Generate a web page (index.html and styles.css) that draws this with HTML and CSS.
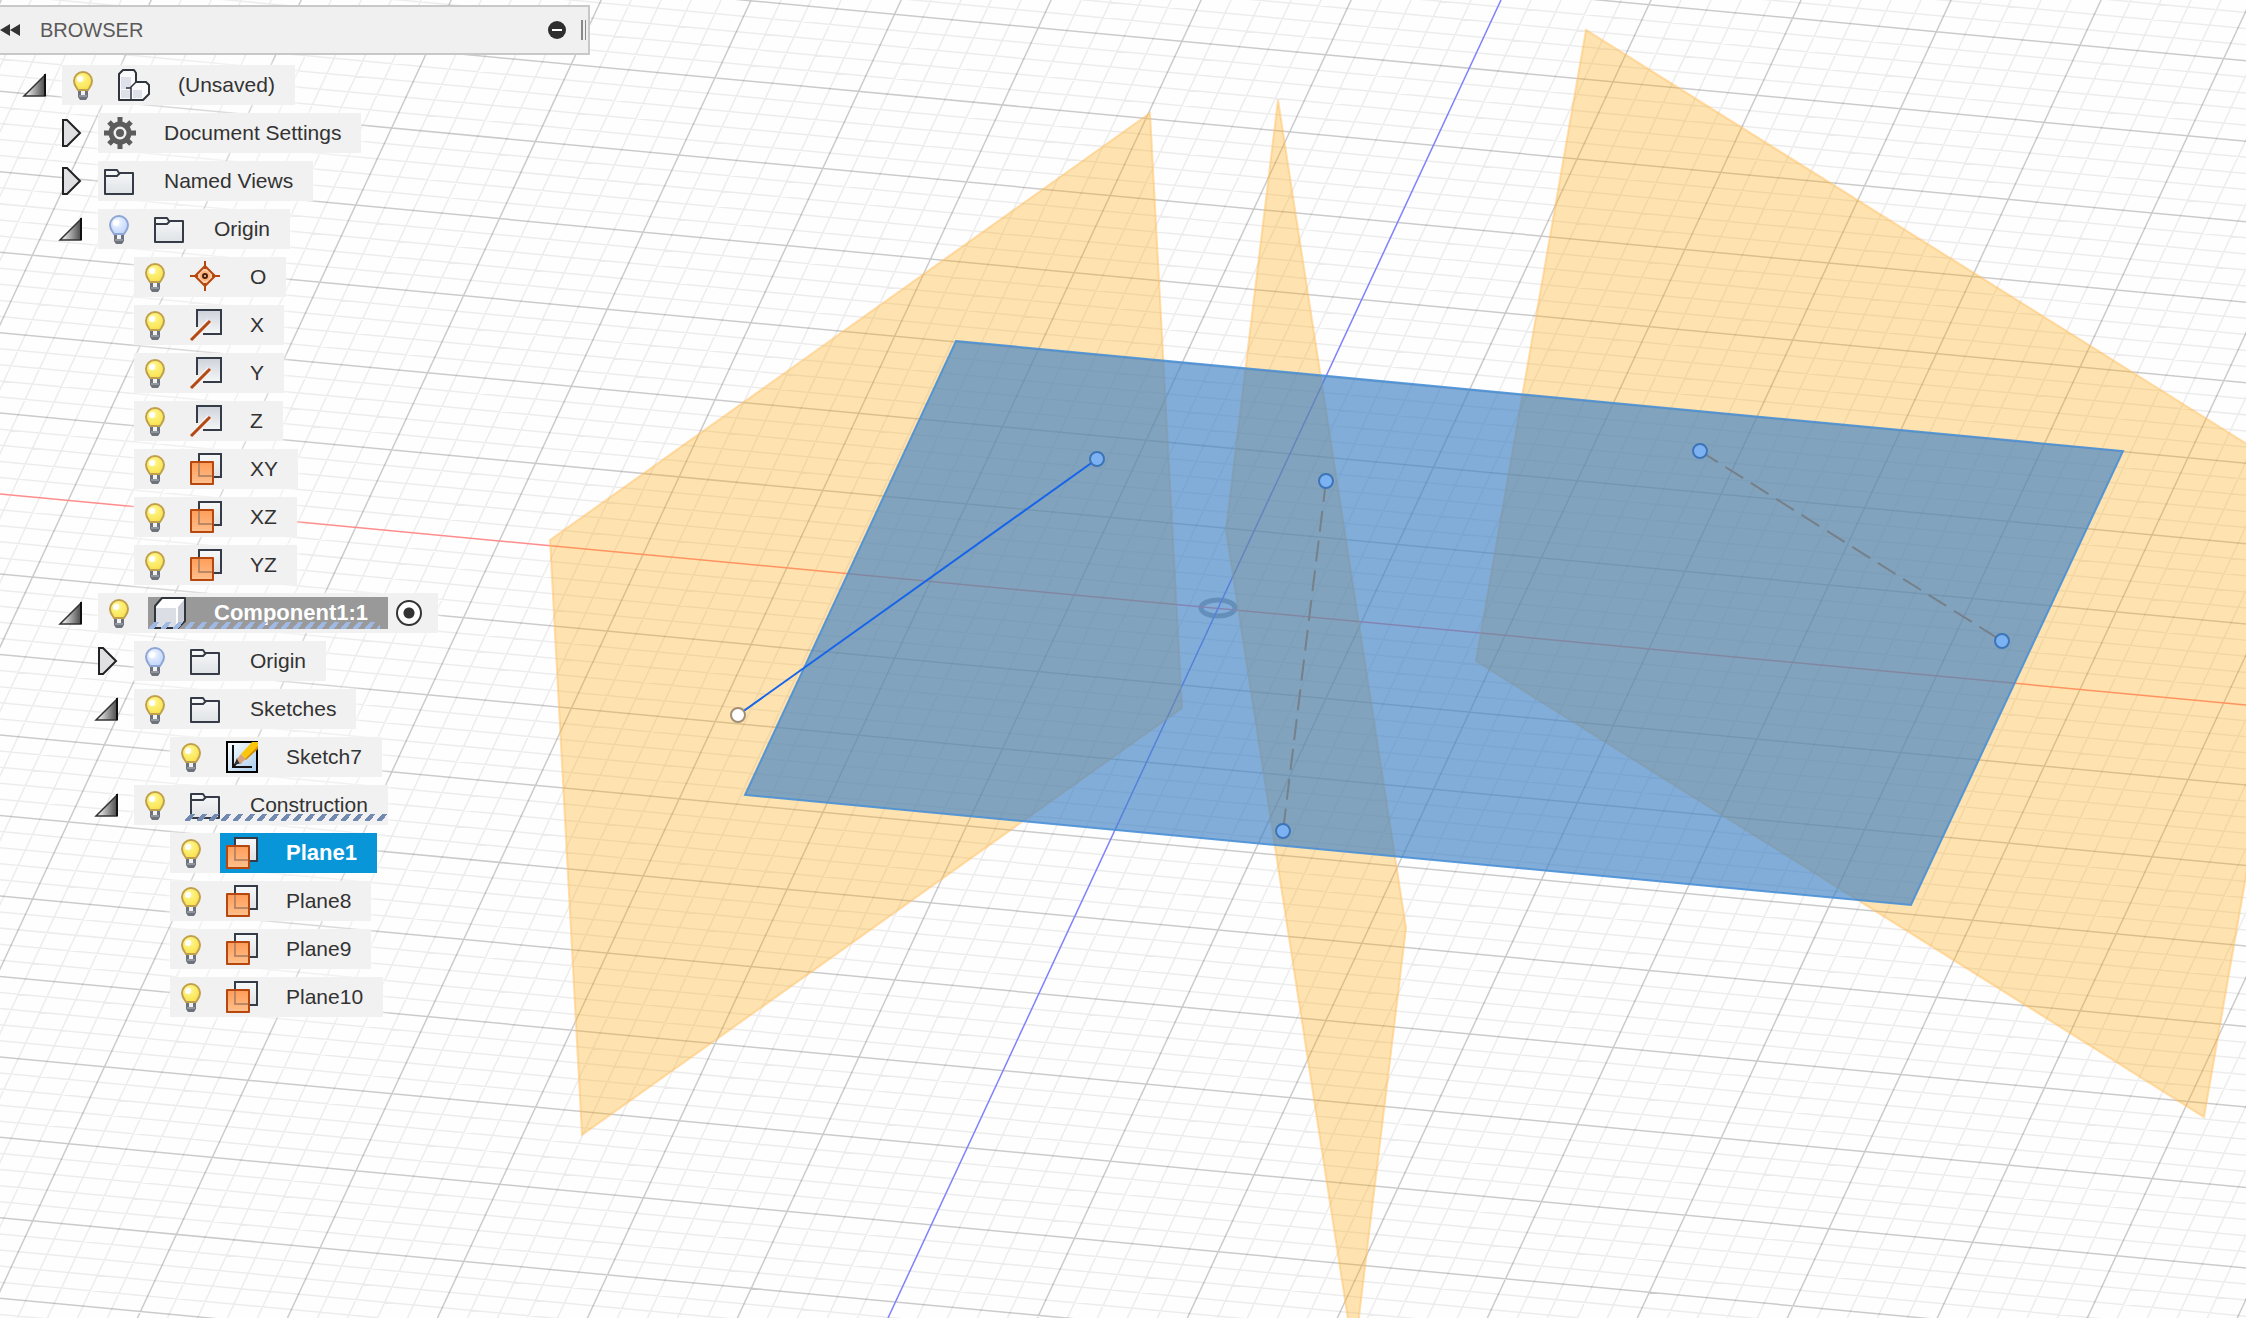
FILE: index.html
```html
<!DOCTYPE html>
<html lang="en">
<head>
  <meta charset="UTF-8" />
  <meta name="viewport" content="width=device-width, initial-scale=1.0"/>
  <title>Browser</title>
  <link rel="stylesheet" href="styles.css">
</head>
<body>

  <!-- shared icons -->
  <svg class="defs" aria-hidden="true">
    <defs>
      <radialGradient id="glow" cx="0.4" cy="0.35" r="0.7">
        <stop offset="0" stop-color="#fffde0"/><stop offset="0.3" stop-color="#fdf27c"/><stop offset="1" stop-color="#f8e04c"/>
      </radialGradient>
      <radialGradient id="dim" cx="0.4" cy="0.35" r="0.7">
        <stop offset="0" stop-color="#f8fbff"/><stop offset="0.5" stop-color="#d8e4ff"/><stop offset="1" stop-color="#c0d4fc"/>
      </radialGradient>
      <linearGradient id="dark" x1="0" y1="0" x2="1" y2="0">
        <stop offset="0.2" stop-color="#e0e0e0"/><stop offset="1" stop-color="#4a4a4a"/>
      </linearGradient>
      <linearGradient id="steel" x1="0" y1="0" x2="0" y2="1">
        <stop offset="0" stop-color="#cfd3da"/><stop offset="1" stop-color="#f4f5f7"/>
      </linearGradient>
      <linearGradient id="paper" x1="0" y1="0" x2="0" y2="1">
        <stop offset="0" stop-color="#f8f9fa"/><stop offset="1" stop-color="#dfe2e6"/>
      </linearGradient>
      <linearGradient id="copper" x1="0" y1="0" x2="0" y2="1">
        <stop offset="0" stop-color="#ff9c58"/><stop offset="1" stop-color="#ffc08c"/>
      </linearGradient>
      <linearGradient id="sky" x1="0" y1="0" x2="1" y2="1">
        <stop offset="0" stop-color="#ffffff"/><stop offset="1" stop-color="#a8cdee"/>
      </linearGradient>
    </defs>
    <symbol id="bulb-base" viewBox="0 0 20 30">
      <path d="M5 19h10v7l-2 3H7l-2-3z" fill="#6d727c"/>
      <path d="M8 20h4v4H8z" fill="#f0f1f3"/>
      <path d="M6 25h8" stroke="#b4b8c0" stroke-width="1"/>
    </symbol>
    <symbol id="bulb-on" viewBox="0 0 20 30">
      <use href="#bulb-base"/>
      <path d="M10 1a9 9 0 0 1 9 9c0 4-2 6-4 9H5C3 16 1 14 1 10a9 9 0 0 1 9-9z" fill="url(#glow)" stroke="#c0a04c" stroke-width="2"/>
      <circle cx="7" cy="8" r="3" fill="#fff"/>
    </symbol>
    <symbol id="bulb-off" viewBox="0 0 20 30">
      <use href="#bulb-base"/>
      <path d="M10 1a9 9 0 0 1 9 9c0 4-2 6-4 9H5C3 16 1 14 1 10a9 9 0 0 1 9-9z" fill="url(#dim)" stroke="#8ea6d4" stroke-width="2"/>
      <circle cx="7" cy="8" r="3" fill="#fff"/>
    </symbol>
    <symbol id="open" viewBox="0 0 24 24">
      <path d="M2 23h21V2z" fill="url(#dark)" stroke="#333" stroke-width="1.500"/>
      <path d="M23 1v22" stroke="#111" stroke-width="2"/>
    </symbol>
    <symbol id="closed" viewBox="0 0 20 28">
      <path d="M1 1h4l13 13L5 27H1z" fill="#e0e0e3" stroke="#222" stroke-width="2"/>
    </symbol>
    <symbol id="folder" viewBox="0 0 32 32">
      <path d="M1 5h12l2 3h14v21H1z" fill="url(#paper)" stroke="#353c48" stroke-width="2" stroke-linejoin="round"/>
      <path d="M1 11h12l3-3" fill="none" stroke="#353c48" stroke-width="2"/>
    </symbol>
    <symbol id="gear" viewBox="0 0 32 32">
      <path d="M16 0v32M0 16h32M5 5l22 22M27 5L5 27" stroke="#5c5c5c" stroke-width="5"/>
      <circle cx="16" cy="16" r="9" fill="#f0f0f0" stroke="#5c5c5c" stroke-width="5"/>
      <circle cx="16" cy="16" r="4" fill="#5c5c5c"/>
    </symbol>
    <symbol id="assembly" viewBox="0 0 32 32">
      <path d="M1 31V5l4-4h11l2 3v9h10l3 3v9l-6 6z" fill="#fbfbfd" stroke="#30343c" stroke-width="2" stroke-linejoin="round"/>
      <path d="M3 8h10v10l-1 2H3zM3 21h9v8H3zM15 21h9v8h-9z" fill="#dfe1ea"/>
      <path d="M13 30V18l5-5M13 19H8" fill="none" stroke="#30343c" stroke-width="1.500"/>
    </symbol>
    <symbol id="point" viewBox="0 0 32 32">
      <path d="M15 5l10 10-10 10L5 15z" fill="#ffd0ac" stroke="#b5470f" stroke-width="2"/>
      <path d="M15 0v8M15 22v8M0 15h8M22 15h8" stroke="#b5470f" stroke-width="2"/>
      <circle cx="15" cy="15" r="5" fill="#ffb07c"/>
      <circle cx="15" cy="15" r="2" fill="#ffd0ac" stroke="#4a2008" stroke-width="2"/>
    </symbol>
    <symbol id="axis" viewBox="0 0 32 32">
      <path d="M8 2h22v22H14l-6-3z" fill="url(#steel)"/>
      <path d="M7 18V1h24v24H13" fill="none" stroke="#353c48" stroke-width="2"/>
      <path d="M1 31l19-19" stroke="#f1f1f1" stroke-width="6"/>
      <path d="M1 31l19-19" stroke="#b5470f" stroke-width="3"/>
    </symbol>
    <symbol id="plane" viewBox="0 0 32 32">
      <path d="M9 1h22v23H9z" fill="url(#paper)" stroke="#353c48" stroke-width="2"/>
      <path d="M1 9h22v22H1z" fill="url(#copper)" stroke="#b5470f" stroke-width="2" stroke-linejoin="round"/>
      <path d="M9 10v13h13" fill="none" stroke="#b98763" stroke-width="2"/>
    </symbol>
    <symbol id="cube" viewBox="0 0 32 32">
      <path d="M1 31V9l7-8h23v23l-7 7z" fill="#fff" stroke="#30343c" stroke-width="2" stroke-linejoin="round"/>
      <path d="M2 11h20v19H2z" fill="#dcdee6"/>
      <path d="M24 10l6-7v20l-6 7z" fill="#c9ccd4"/>
    </symbol>
    <symbol id="sketch" viewBox="0 0 32 32">
      <path d="M1 1h30v30H1z" fill="url(#sky)" stroke="#000" stroke-width="2"/>
      <path d="M7 4v22h19M7 26l6-7" fill="none" stroke="#111" stroke-width="2"/>
      <path d="M8 24l3-7 5 5z" fill="#333"/>
      <path d="M11 18l4-5 5 5-6 5z" fill="#d9a27a"/>
      <path d="M15 13L26 1h6v6L20 18z" fill="#fbc50c"/>
      <path d="M19 18L32 5v3L20 19z" fill="#d08c08"/>
    </symbol>
  </svg>

  <main class="workspace">
    <svg class="canvas" viewBox="0 0 2246 1318" preserveAspectRatio="xMinYMin slice" role="img" aria-label="Model view">
      <g id="grid"></g>
      <ellipse class="origin" cx="1218" cy="608" rx="17" ry="8"/>
      <path class="axis-x" d="M0 494L2246 705"/>
      <path class="axis-z" d="M1501 0L888 1318"/>
      <polygon class="plane" points="1150,113 550,540 582,1135 1182,708"/>
      <polygon class="plane" points="1278,100 1226,530 1354,1358 1406,928"/>
      <polygon class="plane" points="1586,30 1476,661 2204,1117 2314,486"/>
      <polygon class="plane selected" points="956,341 2123,451 1911,905 745,795"/>
      <path class="line" d="M1097 459L738 715"/>
      <path class="line dashed" d="M1326 481L1283 831"/>
      <path class="line dashed" d="M1700 451L2002 641"/>
      <circle class="dot" cx="1097" cy="459" r="7"/>
      <circle class="dot free" cx="738" cy="715" r="7"/>
      <circle class="dot" cx="1326" cy="481" r="7"/>
      <circle class="dot" cx="1283" cy="831" r="7"/>
      <circle class="dot" cx="1700" cy="451" r="7"/>
      <circle class="dot" cx="2002" cy="641" r="7"/>
    </svg>

    <aside class="browser">
      <header class="browser-header">
        <button class="collapse" aria-label="Collapse">
          <svg width="20" height="14" viewBox="0 0 20 14"><path d="M10 1v12L0 7zM20 1v12L10 7z" fill="#333"/></svg>
        </button>
        <h1>BROWSER</h1>
        <button class="minimize" aria-label="Minimize">
          <svg width="18" height="18" viewBox="0 0 18 18"><circle cx="9" cy="9" r="9" fill="#2e2e2e"/><path d="M4 9h10" stroke="#fff" stroke-width="2"/></svg>
        </button>
        <span class="grip"></span>
      </header>

      <ul class="tree">
        <li>
          <div class="row">
            <button class="toggle" aria-label="Collapse"><svg class="i-open"><use href="#open"/></svg></button>
            <div class="chip">
              <button class="bulb" aria-label="Hide"><svg><use href="#bulb-on"/></svg></button>
              <a class="item" href="#"><svg><use href="#assembly"/></svg>(Unsaved)</a>
            </div>
          </div>
          <ul>
            <li>
              <div class="row">
                <button class="toggle" aria-label="Expand"><svg class="i-closed"><use href="#closed"/></svg></button>
                <div class="chip"><a class="item" href="#"><svg><use href="#gear"/></svg>Document Settings</a></div>
              </div>
            </li>
            <li>
              <div class="row">
                <button class="toggle" aria-label="Expand"><svg class="i-closed"><use href="#closed"/></svg></button>
                <div class="chip"><a class="item" href="#"><svg><use href="#folder"/></svg>Named Views</a></div>
              </div>
            </li>
            <li>
              <div class="row">
                <button class="toggle" aria-label="Collapse"><svg class="i-open"><use href="#open"/></svg></button>
                <div class="chip">
                  <button class="bulb" aria-label="Show"><svg><use href="#bulb-off"/></svg></button>
                  <a class="item" href="#"><svg><use href="#folder"/></svg>Origin</a>
                </div>
              </div>
              <ul>
                <li><div class="row leaf"><div class="chip">
                  <button class="bulb" aria-label="Hide"><svg><use href="#bulb-on"/></svg></button>
                  <a class="item" href="#"><svg><use href="#point"/></svg>O</a>
                </div></div></li>
                <li><div class="row leaf"><div class="chip">
                  <button class="bulb" aria-label="Hide"><svg><use href="#bulb-on"/></svg></button>
                  <a class="item" href="#"><svg><use href="#axis"/></svg>X</a>
                </div></div></li>
                <li><div class="row leaf"><div class="chip">
                  <button class="bulb" aria-label="Hide"><svg><use href="#bulb-on"/></svg></button>
                  <a class="item" href="#"><svg><use href="#axis"/></svg>Y</a>
                </div></div></li>
                <li><div class="row leaf"><div class="chip">
                  <button class="bulb" aria-label="Hide"><svg><use href="#bulb-on"/></svg></button>
                  <a class="item" href="#"><svg><use href="#axis"/></svg>Z</a>
                </div></div></li>
                <li><div class="row leaf"><div class="chip">
                  <button class="bulb" aria-label="Hide"><svg><use href="#bulb-on"/></svg></button>
                  <a class="item" href="#"><svg><use href="#plane"/></svg>XY</a>
                </div></div></li>
                <li><div class="row leaf"><div class="chip">
                  <button class="bulb" aria-label="Hide"><svg><use href="#bulb-on"/></svg></button>
                  <a class="item" href="#"><svg><use href="#plane"/></svg>XZ</a>
                </div></div></li>
                <li><div class="row leaf"><div class="chip">
                  <button class="bulb" aria-label="Hide"><svg><use href="#bulb-on"/></svg></button>
                  <a class="item" href="#"><svg><use href="#plane"/></svg>YZ</a>
                </div></div></li>
              </ul>
            </li>
            <li>
              <div class="row">
                <button class="toggle" aria-label="Collapse"><svg class="i-open"><use href="#open"/></svg></button>
                <div class="chip">
                  <button class="bulb" aria-label="Hide"><svg><use href="#bulb-on"/></svg></button>
                  <a class="item component hatched" href="#"><svg><use href="#cube"/></svg>Component1:1</a>
                  <input class="activate" type="radio" name="active" aria-label="Activate component" checked>
                </div>
              </div>
              <ul>
                <li>
                  <div class="row">
                    <button class="toggle" aria-label="Expand"><svg class="i-closed"><use href="#closed"/></svg></button>
                    <div class="chip">
                      <button class="bulb" aria-label="Show"><svg><use href="#bulb-off"/></svg></button>
                      <a class="item" href="#"><svg><use href="#folder"/></svg>Origin</a>
                    </div>
                  </div>
                </li>
                <li>
                  <div class="row">
                    <button class="toggle" aria-label="Collapse"><svg class="i-open"><use href="#open"/></svg></button>
                    <div class="chip">
                      <button class="bulb" aria-label="Hide"><svg><use href="#bulb-on"/></svg></button>
                      <a class="item" href="#"><svg><use href="#folder"/></svg>Sketches</a>
                    </div>
                  </div>
                  <ul>
                    <li><div class="row leaf"><div class="chip">
                      <button class="bulb" aria-label="Hide"><svg><use href="#bulb-on"/></svg></button>
                      <a class="item" href="#"><svg><use href="#sketch"/></svg>Sketch7</a>
                    </div></div></li>
                  </ul>
                </li>
                <li>
                  <div class="row">
                    <button class="toggle" aria-label="Collapse"><svg class="i-open"><use href="#open"/></svg></button>
                    <div class="chip">
                      <button class="bulb" aria-label="Hide"><svg><use href="#bulb-on"/></svg></button>
                      <a class="item hatched" href="#"><svg><use href="#folder"/></svg>Construction</a>
                    </div>
                  </div>
                  <ul>
                    <li><div class="row leaf"><div class="chip">
                      <button class="bulb" aria-label="Hide"><svg><use href="#bulb-on"/></svg></button>
                      <a class="item active" href="#"><svg><use href="#plane"/></svg>Plane1</a>
                    </div></div></li>
                    <li><div class="row leaf"><div class="chip">
                      <button class="bulb" aria-label="Hide"><svg><use href="#bulb-on"/></svg></button>
                      <a class="item" href="#"><svg><use href="#plane"/></svg>Plane8</a>
                    </div></div></li>
                    <li><div class="row leaf"><div class="chip">
                      <button class="bulb" aria-label="Hide"><svg><use href="#bulb-on"/></svg></button>
                      <a class="item" href="#"><svg><use href="#plane"/></svg>Plane9</a>
                    </div></div></li>
                    <li><div class="row leaf"><div class="chip">
                      <button class="bulb" aria-label="Hide"><svg><use href="#bulb-on"/></svg></button>
                      <a class="item" href="#"><svg><use href="#plane"/></svg>Plane10</a>
                    </div></div></li>
                  </ul>
                </li>
              </ul>
            </li>
          </ul>
        </li>
      </ul>
    </aside>
  </main>

  <script src="grid.js"></script>
</body>
</html>
```

FILE: styles.css
```css
* {margin:0; padding:0; box-sizing:border-box;}
body {
  font-family: "Liberation Sans", Arial, sans-serif;
  font-size: 21px;
  color: #333;
  background: #fefefe;
}

button {border: 0; background: none; cursor: pointer;}
ul {list-style: none;}
.defs {position: absolute; width: 0; height: 0;}

.workspace {
  position: relative;
  min-height: 100vh;
  overflow: hidden;
}

/* model view, sits behind the browser panel */
.canvas {
  position: absolute;
  top: 0; left: 0;
  width: 100%;
  height: 100%;
}

.canvas path {fill: none;}
.canvas .minor {stroke: #000; stroke-opacity: 0.07; stroke-width: 1.5;}
.canvas .major {stroke: #000; stroke-opacity: 0.2; stroke-width: 1.5;}
.canvas .axis-x {stroke: #ff8c8c; stroke-width: 1.5;}
.canvas .axis-z {stroke: #8080ff; stroke-width: 1.5;}
.canvas .origin {fill: none; stroke: #555; stroke-opacity: 0.5; stroke-width: 5;}
.canvas .plane {
  fill: #ffa500;
  fill-opacity: 0.31;
  stroke: #ffc266;
  stroke-opacity: 0.5;
  stroke-width: 2;
}
.canvas .plane.selected {
  fill: #3f81c5;
  fill-opacity: 0.65;
  stroke: #4a90d6;
  stroke-opacity: 0.9;
}
.canvas .line {stroke: #1464ec; stroke-width: 2;}
.canvas .line.dashed {stroke: #76808a; stroke-dasharray: 21 9;}
.canvas .dot {fill: #7db2f2; stroke: #3c74b8; stroke-width: 2;}
.canvas .dot.free {fill: #fff; stroke: #a08f74;}

.browser {
  position: relative;
  width: 590px;
  max-width: 100%;
  padding-top: 5px;
}

.browser-header {
  display: flex;
  align-items: center;
  height: 50px;
  background: #f0f0f0;
  border: 2px solid #c8c8c8;
  border-left: 0;
}

.browser-header h1 {
  margin-left: 20px;
  font-size: 20px;
  font-weight: normal;
  color: #5a5a5a;
}

.browser-header svg {display: block;}
.minimize {margin-left: auto;}

.grip {
  width: 5px;
  height: 20px;
  margin: 0 2px 0 15px;
  border-left: 2px solid #888;
  border-right: 1px solid #888;
}

.tree {padding: 10px 0 0 22px;}
.tree ul {padding-left: 36px;}

.row {
  display: flex;
  height: 40px;
  margin-bottom: 8px;
}

.row.leaf {padding-left: 40px;}

.toggle {
  display: flex;
  align-items: center;
  width: 40px;
}

.i-open {width: 24px; height: 24px;}
.i-closed {width: 20px; height: 28px; margin-left: 4px;}

.chip {
  display: flex;
  align-items: center;
  background: #f1f1f1;
  box-shadow: 0 0 8px rgba(255,255,255,0.8);
}

.bulb {width: 50px; height: 40px; padding: 6px 19px 4px 11px;}
.bulb svg {display: block; width: 20px; height: 30px;}

.item {
  position: relative;
  display: flex;
  align-items: center;
  gap: 28px;
  height: 40px;
  padding: 0 20px 0 6px;
  color: #333;
  text-decoration: none;
  white-space: nowrap;
}

.item svg {width: 32px; height: 32px;}
.item.active {background: #0896d9; color: #fff; font-size: 22px; font-weight: bold;}
.item.component {height: 32px; background: #999; color: #fff; font-size: 22px; font-weight: bold;}

/* diagonal dashes under the label */
.hatched::after {
  content: "";
  position: absolute;
  left: 0; right: 0; bottom: 4px;
  height: 7px;
  background: linear-gradient(130deg, transparent 34%, #7189b0 34%, #7189b0 64%, transparent 64%) 0 0 / 12px 7px;
}

.component.hatched::after {
  bottom: 0;
  right: 8px;
  background-image: linear-gradient(130deg, transparent 34%, #a0b8e4 34%, #a0b8e4 64%, transparent 64%);
}

.activate {
  appearance: none;
  width: 26px;
  height: 26px;
  margin: 0 16px 0 8px;
  border: 2px solid #333;
  border-radius: 50%;
  background: radial-gradient(circle, #333 5px, #fff 6px);
}
```

FILE: grid.js
```js
// steps of one major cell along both ground axes, and where the axes cross
const origin = [1218, 608];
const u = [143.7, 13.5];
const v = [-35.9, 77.1];
const reach = 20;
const parts = 5;

const at = (a, b) => [
  origin[0] + a * u[0] + b * v[0],
  origin[1] + a * u[1] + b * v[1]
].join(' ');

let minor = '';
let major = '';
for (let n = -reach * parts; n <= reach * parts; n++) {
  if (n === 0) continue;
  const k = n / parts;
  const d = `M${at(k, -reach)}L${at(k, reach)}M${at(-reach, k)}L${at(reach, k)}`;
  if (n % parts === 0) major += d;
  else minor += d;
}

document.getElementById('grid').innerHTML =
  `<path class="minor" d="${minor}"/><path class="major" d="${major}"/>`;
```
